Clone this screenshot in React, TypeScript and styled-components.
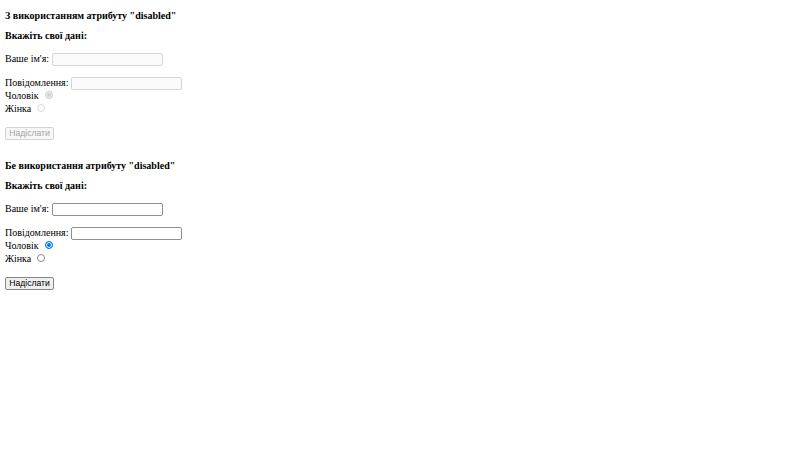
import React from "react";
import styled, { createGlobalStyle } from "styled-components";

const Global = createGlobalStyle`
  html, body { margin: 0; padding: 0; background: #fff; }
  body { font-family: "Liberation Serif", "Times New Roman", serif; color: #000; }
`;

const Page = styled.div`
  padding: 9px 5px 0 5px;
  display: flex;
  flex-direction: column;
  gap: 19px;
`;

const Section = styled.form`
  display: flex;
  flex-direction: column;
  align-items: flex-start;
`;

const Heading = styled.div<{ $gap: number }>`
  font-size: 10px;
  font-weight: bold;
  line-height: 13px;
  margin-bottom: ${(p) => p.$gap}px;
`;

const FieldRow = styled.div<{ $last?: boolean }>`
  display: flex;
  align-items: center;
  height: 13px;
  margin-bottom: ${(p) => (p.$last ? 0 : 11)}px;
  font-size: 10px;
  line-height: 12px;
`;

const LabelText = styled.span`
  margin-right: 2.5px;
  padding-bottom: 1px;
`;

const TextInput = styled.input`
  box-sizing: border-box;
  width: 111px;
  height: 13px;
  margin: 0;
  padding: 0 2px;
  font-size: 9px;
  border: 1px solid #8f8f8f;
  border-radius: 2px;
  background: #fff;
  outline: none;
  &:disabled {
    border-color: #d6d6d6;
    background: #fafafa;
  }
`;

const RadioRow = styled.div`
  display: flex;
  align-items: center;
  height: 12.5px;
  font-size: 10px;
  line-height: 12.5px;
`;

const Radio = styled.input`
  appearance: none;
  -webkit-appearance: none;
  box-sizing: border-box;
  width: 8px;
  height: 8px;
  margin: 0 0 2px 6px;
  border-radius: 50%;
  border: 1px solid #8a8a8a;
  background: #fff;
  &:checked {
    border-color: #0075ff;
    background: #0075ff;
    box-shadow: inset 0 0 0 1px #fff;
  }
  &:disabled {
    border-color: #d8d8d8;
    background: #fff;
  }
  &:disabled:checked {
    border-color: #d0d0d0;
    background: #d0d0d0;
    box-shadow: inset 0 0 0 1px #f4f4f4;
  }
`;

const Submit = styled.button`
  box-sizing: border-box;
  margin-top: 12px;
  height: 13px;
  width: 49px;
  padding: 0;
  font-family: "Liberation Sans", Arial, sans-serif;
  font-size: 8.6px;
  line-height: 11px;
  color: #000;
  background: #efefef;
  border: 1px solid #858585;
  border-radius: 2px;
  &:disabled {
    color: #a4a4a4;
    background: #f7f7f7;
    border-color: #d4d4d4;
  }
`;

function FormBlock({ title, disabled }: { title: string; disabled: boolean }) {
  return (
    <Section onSubmit={(e) => e.preventDefault()}>
      <Heading $gap={7}>{title}</Heading>
      <Heading $gap={11}>Вкажіть свої дані:</Heading>
      <FieldRow>
        <LabelText>Ваше ім'я:</LabelText>
        <TextInput type="text" disabled={disabled} />
      </FieldRow>
      <FieldRow $last>
        <LabelText>Повідомлення:</LabelText>
        <TextInput type="text" disabled={disabled} />
      </FieldRow>
      <RadioRow>
        Чоловік
        <Radio type="radio" name={title} defaultChecked disabled={disabled} />
      </RadioRow>
      <RadioRow>
        Жінка
        <Radio type="radio" name={title} disabled={disabled} />
      </RadioRow>
      <Submit type="submit" disabled={disabled}>
        Надіслати
      </Submit>
    </Section>
  );
}

export default function App() {
  return (
    <>
      <Global />
      <Page>
        <FormBlock title={'З використанням атрибуту "disabled"'} disabled />
        <FormBlock title={'Бе використання атрибуту "disabled"'} disabled={false} />
      </Page>
    </>
  );
}
